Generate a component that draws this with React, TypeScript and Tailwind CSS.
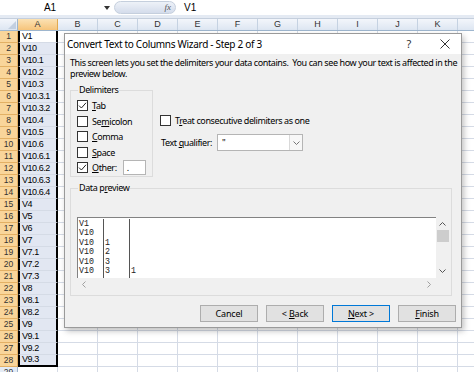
import React from "react";

const rows = ["V1","V10","V10.1","V10.2","V10.3","V10.3.1","V10.3.2","V10.4","V10.5","V10.6","V10.6.1","V10.6.2","V10.6.3","V10.6.4","V4","V5","V6","V7","V7.1","V7.2","V7.3","V8","V8.1","V8.2","V9","V9.1","V9.2","V9.3",""];
const cols = ["B","C","D","E","F","G","H","I","J","K"];

const U = ({ c }: { c: string }) => <span className="underline underline-offset-1">{c}</span>;

function Check({ checked }: { checked?: boolean }) {
  return (
    <span className="w-[11px] h-[11px] border border-[#333] bg-white flex items-center justify-center shrink-0">
      {checked && (
        <svg width="9" height="9" viewBox="0 0 9 9">
          <path d="M1 4.6 L3.4 7 L8 1.8" fill="none" stroke="#222" strokeWidth="1" />
        </svg>
      )}
    </span>
  );
}

function Btn({ children, primary }: { children: React.ReactNode; primary?: boolean }) {
  return (
    <div className={"w-[58px] h-[17px] flex items-center justify-center bg-[#e1e1e1] border tracking-[-0.2px] " + (primary ? "border-[#0078d7]" : "border-[#adadad]")}>
      {children}
    </div>
  );
}

export default function App() {
  return (
    <div className="w-[474px] h-[372px] relative overflow-hidden bg-white" style={{ fontFamily: '"Liberation Sans", Arial, sans-serif' }}>
      {/* formula bar */}
      <div className="h-[15px] flex items-center bg-white text-[10px] text-black">
        <div className="w-[100px] text-center">A1</div>
        <div className="w-[14px] flex justify-center">
          <svg width="6" height="4" viewBox="0 0 6 4"><path d="M0 0 H6 L3 4 Z" fill="#333" /></svg>
        </div>
        <div className="w-[62px] h-[13px] rounded-full bg-gradient-to-b from-[#eef2f8] to-[#d4dceb] border border-[#c5cfdd] flex items-center justify-end pr-[4px]">
          <span className="italic text-[9px] text-[#555]" style={{ fontFamily: '"Liberation Serif", serif' }}>fx</span>
        </div>
        <div className="pl-[8px]">V1</div>
      </div>
      <div className="h-[4px] bg-[#e4eaf3] border-b border-[#c5cfdd]" />
      {/* column headers */}
      <div className="flex h-[12px] text-[9px] text-[#333] bg-gradient-to-b from-[#f3f6fb] to-[#dde6f2] border-b border-[#9eb6ce]">
        <div className="w-[18px] shrink-0 border-r border-[#9eb6ce] relative">
          <svg className="absolute right-[1px] bottom-[1px]" width="8" height="8" viewBox="0 0 8 8"><path d="M8 0 V8 H0 Z" fill="#c2cfe0" /></svg>
        </div>
        <div className="w-[40px] shrink-0 border-r border-[#e1a94f] bg-gradient-to-b from-[#fbe2b4] to-[#f6c47a] flex items-center justify-center">A</div>
        {cols.map((c) => (
          <div key={c} className="w-[40px] shrink-0 border-r border-[#c5d2e2] flex items-center justify-center">{c}</div>
        ))}
        <div className="w-[20px] shrink-0" />
      </div>
      {/* rows */}
      <div className="flex flex-col text-[9px] tracking-[-0.45px]">
        {rows.map((v, i) => (
          <div key={i} className="flex h-[12px]">
            <div className={"w-[18px] shrink-0 flex items-center justify-center text-[8.5px] tracking-normal border-r border-b " + (v ? "bg-[#f9d59a] border-[#e3b064] text-[#333]" : "bg-[#e4ebf5] border-[#9eb6ce] text-[#333]")}>{i + 1}</div>
            <div className={"w-[40px] shrink-0 flex items-center pl-[2px] border-b " + (v ? (i === 0 ? "bg-white border-[#d5dbe6]" : "bg-[#e2e7f2] border-[#d5dbe6]") : "bg-white border-[#d5dbe6]") + (v ? " border-l-2 border-r-2 border-l-black border-r-black" : " border-r border-r-[#d5dbe6]") + (i === 27 ? " !border-b-2 !border-b-black" : "")}>{v}</div>
            {cols.map((c) => (
              <div key={c} className="w-[40px] shrink-0 border-r border-b border-[#d5dbe6]" />
            ))}
            <div className="w-[20px] shrink-0 border-b border-[#d5dbe6]" />
          </div>
        ))}
      </div>

      {/* dialog */}
      <div className="absolute left-[64px] top-[33px] w-[398px] h-[295px] border border-[#9a9a9a] bg-[#f0f0f0] shadow-[2px_3px_6px_rgba(0,0,0,0.25)] flex flex-col text-black whitespace-nowrap" style={{ fontFamily: '"Noto Sans", "Liberation Sans", sans-serif' }}>
        <div className="h-[20px] bg-white flex items-center pl-[2px] shrink-0">
          <div className="flex-1 text-[10px] tracking-[-0.3px]">Convert Text to Columns Wizard - Step 2 of 3</div>
          <div className="w-[20px] text-center text-[11px] text-[#333]">?</div>
          <div className="w-[16px]" />
          <div className="w-[20px] flex justify-center">
            <svg width="10" height="10" viewBox="0 0 10 10"><path d="M0.5 0.5 L9.5 9.5 M9.5 0.5 L0.5 9.5" stroke="#333" strokeWidth="1" /></svg>
          </div>
          <div className="w-[6px]" />
        </div>
        <div className="flex-1 flex flex-col pl-[5px] pr-[4px] pt-[3px] text-[9px] tracking-[-0.4px] leading-[11px]">
          <div>
            This screen lets you set the delimiters your data contains.&nbsp; You can see how your text is affected in the<br />preview below.
          </div>
          <div className="flex mt-[5px]">
            <fieldset className="w-[83px] h-[93px] border border-[#dcdcdc] pl-[6px] pt-0 m-0 shrink-0">
              <legend className="px-[1px] ml-[1px] leading-[12px]">Delimiters</legend>
              <div className="flex flex-col mt-[2px]">
                <div className="h-[15.5px] flex items-center gap-[4px]"><Check checked /><span><U c="T" />ab</span></div>
                <div className="h-[15.5px] flex items-center gap-[4px]"><Check /><span>Se<U c="m" />icolon</span></div>
                <div className="h-[15.5px] flex items-center gap-[4px]"><Check /><span><U c="C" />omma</span></div>
                <div className="h-[15.5px] flex items-center gap-[4px]"><Check /><span><U c="S" />pace</span></div>
                <div className="h-[15.5px] flex items-center gap-[4px]"><Check checked /><span><U c="O" />ther:</span>
                  <div className="ml-[2px] w-[23px] h-[15px] bg-white border border-[#b5b5b5] pl-[3px] leading-[13px]">.</div>
                </div>
              </div>
            </fieldset>
            <div className="ml-[7px] flex flex-col pt-[30px]">
              <div className="h-[12px] flex items-center gap-[4px]"><Check /><span>T<U c="r" />eat consecutive delimiters as one</span></div>
              <div className="flex items-center mt-[8px]">
                <span className="w-[57px] pl-[1px]">Text <U c="q" />ualifier:</span>
                <div className="w-[86px] h-[17px] bg-white border border-[#b5b5b5] flex items-center">
                  <span className="flex-1 pl-[4px]">"</span>
                  <div className="w-[13px] h-[15px] border-l border-[#d9d9d9] bg-[#f7f7f7] flex items-center justify-center">
                    <svg width="7" height="4" viewBox="0 0 7 4"><path d="M0.5 0.5 L3.5 3.5 L6.5 0.5" fill="none" stroke="#666" strokeWidth="0.9" /></svg>
                  </div>
                </div>
              </div>
            </div>
          </div>
          <fieldset className="w-[382px] h-[114px] border border-[#dcdcdc] mt-[5px] m-0 pl-[6px] pt-0">
            <legend className="px-[1px] ml-[1px] leading-[12px]">Data p<U c="r" />eview</legend>
            <div className="mt-[23px] flex flex-col w-[372px]">
              <div className="flex h-[61px]">
                <div className="flex-1 bg-white border-t border-l border-[#828282] flex text-[8.3px] tracking-normal leading-[9.4px] pt-[1px] text-[#222]" style={{ fontFamily: '"Liberation Mono", "Courier New", monospace' }}>
                  <div className="w-[26px] border-r border-[#555] pl-[1px]">V1<br />V10<br />V10<br />V10<br />V10<br />V10</div>
                  <div className="w-[26px] border-r border-[#555] pl-[1px]"><br /><br />1<br />2<br />3<br />3</div>
                  <div className="flex-1 pl-[1px]"><br /><br /><br /><br /><br />1</div>
                </div>
                <div className="w-[13px] bg-[#f0f0f0] flex flex-col items-center">
                  <svg className="mt-[5px]" width="7" height="4" viewBox="0 0 7 4"><path d="M0.5 3.5 L3.5 0.5 L6.5 3.5" fill="none" stroke="#555" strokeWidth="1" /></svg>
                  <div className="w-[12px] h-[12px] bg-[#cdcdcd] mt-[4px]" />
                  <div className="flex-1" />
                  <svg className="mb-[5px]" width="7" height="4" viewBox="0 0 7 4"><path d="M0.5 0.5 L3.5 3.5 L6.5 0.5" fill="none" stroke="#555" strokeWidth="1" /></svg>
                </div>
              </div>
              <div className="flex h-[12px]">
                <div className="flex-1 flex items-center justify-between px-[5px]">
                  <svg width="4" height="7" viewBox="0 0 4 7"><path d="M3.5 0.5 L0.5 3.5 L3.5 6.5" fill="none" stroke="#a0a0a0" strokeWidth="1" /></svg>
                  <svg width="4" height="7" viewBox="0 0 4 7"><path d="M0.5 0.5 L3.5 3.5 L0.5 6.5" fill="none" stroke="#a0a0a0" strokeWidth="1" /></svg>
                </div>
                <div className="w-[13px]" />
              </div>
            </div>
          </fieldset>
          <div className="flex justify-end gap-[8px] mt-[9px] pr-[1px]">
            <Btn>Cancel</Btn>
            <Btn>&lt;&nbsp;<U c="B" />ack</Btn>
            <Btn primary><U c="N" />ext&nbsp;&gt;</Btn>
            <Btn><U c="F" />inish</Btn>
          </div>
        </div>
      </div>
    </div>
  );
}
